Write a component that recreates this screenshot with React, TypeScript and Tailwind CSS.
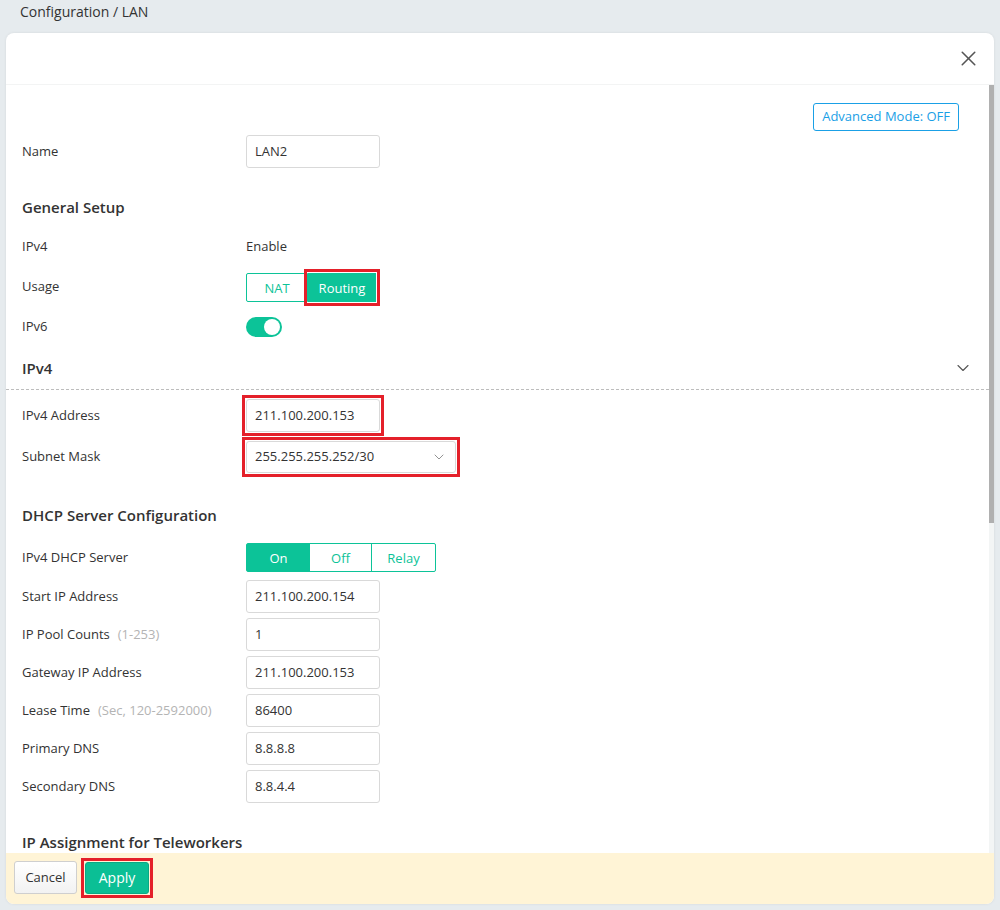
import { X, ChevronDown } from 'lucide-react';

const TEAL = 'bg-[#0cc398]';

// square red annotation frame drawn over a control
const RedBox = ({ children }: { children: React.ReactNode }) => (
  <div className="relative">
    {children}
    <span className="absolute -inset-1 border-[3px] border-[#e4202a] pointer-events-none" />
  </div>
);

const Field = ({ value }: { value: string }) => (
  <div className="w-[134px] h-[33px] border border-[#d9d9d9] rounded-[3px] bg-white flex items-center px-2 text-[13px] text-[#333]">
    {value}
  </div>
);

const Row = ({
  label,
  hint,
  children,
  className = '',
}: {
  label: string;
  hint?: string;
  children: React.ReactNode;
  className?: string;
}) => (
  <div className={`flex items-center ${className}`}>
    <div className="w-[224px] shrink-0 text-[13px] text-[#333]">
      {label}
      {hint && <span className="ml-2 text-[#b4b4b4]">{hint}</span>}
    </div>
    {children}
  </div>
);

const Heading = ({ children, className = '' }: { children: React.ReactNode; className?: string }) => (
  <div className={`h-[22px] flex items-center text-[15px] font-semibold text-[#333] ${className}`}>{children}</div>
);

export default function App() {
  const dhcpRows = [
    { label: 'Start IP Address', value: '211.100.200.154' },
    { label: 'IP Pool Counts', hint: '(1-253)', value: '1' },
    { label: 'Gateway IP Address', value: '211.100.200.153' },
    { label: 'Lease Time', hint: '(Sec, 120-2592000)', value: '86400' },
    { label: 'Primary DNS', value: '8.8.8.8' },
    { label: 'Secondary DNS', value: '8.8.4.4' },
  ];

  return (
    <div className="w-[1000px] h-[910px] bg-[#e6ebee] font-['Open_Sans',sans-serif] text-[#333] overflow-hidden">
      <div className="h-[33px] pl-5 pt-[2px] text-[14px] leading-5 text-[#333]">Configuration / LAN</div>

      <div className="ml-[6px] w-[988px] h-[871px] bg-white rounded-lg shadow-[0_0_3px_rgba(0,0,0,0.08)] flex flex-col overflow-hidden">
        {/* header */}
        <div className="h-[52px] shrink-0 flex items-center justify-end pr-[13px] border-b border-[#f3f4f4]">
          <X size={25} strokeWidth={1.5} className="text-[#555]" />
        </div>

        {/* body */}
        <div className="flex flex-1 min-h-0">
          <div className="flex-1 overflow-hidden pl-4 pr-[30px] pt-[18px]">
            <div className="flex justify-end">
              <div className="h-[28px] px-2 flex items-center border border-[#1aa0e6] rounded-[3px] text-[13px] text-[#1aa0e6]">
                Advanced Mode: OFF
              </div>
            </div>

            <Row label="Name" className="mt-1 h-[33px]">
              <Field value="LAN2" />
            </Row>

            <Heading className="mt-[28px]">General Setup</Heading>

            <Row label="IPv4" className="mt-[9px] h-10">
              <span className="text-[13px]">Enable</span>
            </Row>
            <Row label="Usage" className="h-10">
              <div className="flex h-[29px] text-[13px]">
                <div className="w-[62px] border border-[#0cc398] rounded-l-[2px] text-[#0cc398] flex items-center justify-center pt-[3px]">
                  NAT
                </div>
                <RedBox>
                  <div className={`w-[68px] h-[29px] ${TEAL} text-white flex items-center justify-center pt-[3px]`}>
                    Routing
                  </div>
                </RedBox>
              </div>
            </Row>
            <Row label="IPv6" className="h-10">
              <div className={`w-9 h-5 rounded-full ${TEAL} flex items-center justify-end pr-[2px]`}>
                <div className="w-4 h-4 rounded-full bg-white" />
              </div>
            </Row>

            <div className="-ml-4 -mr-[30px] pl-4 pr-[16px] h-[43px] flex items-center justify-between border-b border-dashed border-[#bdbdbd]">
              <span className="text-[15px] font-semibold">IPv4</span>
              <ChevronDown size={20} strokeWidth={1.3} className="text-[#555]" />
            </div>

            <Row label="IPv4 Address" className="mt-[9px] h-[33px]">
              <RedBox>
                <Field value="211.100.200.153" />
              </RedBox>
            </Row>
            <Row label="Subnet Mask" className="mt-[9px] h-[32px]">
              <RedBox>
                <div className="w-[210px] h-[32px] border border-[#d9d9d9] rounded-[3px] flex items-center justify-between px-2 text-[13px]">
                  <span>255.255.255.252/30</span>
                  <ChevronDown size={16} strokeWidth={1.2} className="text-[#777]" />
                </div>
              </RedBox>
            </Row>

            <Heading className="mt-[31px]">DHCP Server Configuration</Heading>

            <Row label="IPv4 DHCP Server" className="mt-[17px] h-[29px]">
              <div className="flex h-[29px] text-[13px] border border-[#0cc398] rounded-[2px]">
                <div className={`w-[63px] ${TEAL} text-white flex items-center justify-center pt-[3px]`}>On</div>
                <div className="w-[62px] text-[#0cc398] border-r border-[#0cc398] flex items-center justify-center pt-[3px]">
                  Off
                </div>
                <div className="w-[63px] text-[#0cc398] flex items-center justify-center pt-[3px]">Relay</div>
              </div>
            </Row>

            <div className="mt-2 flex flex-col gap-[5px]">
              {dhcpRows.map((r) => (
                <Row key={r.label} label={r.label} hint={r.hint} className="h-[33px]">
                  <Field value={r.value} />
                </Row>
              ))}
            </div>

            <Heading className="mt-[28px]">IP Assignment for Teleworkers</Heading>
          </div>

          {/* scrollbar */}
          <div className="w-[5px] shrink-0 bg-[#f3f5f5]">
            <div className="h-[438px] bg-[#b0b0b0]" />
          </div>
        </div>

        {/* footer */}
        <div className="h-[51px] shrink-0 bg-[#fff4d6] flex items-center gap-2 pl-2 pb-[2px]">
          <div className="h-[33px] w-[63px] flex items-center justify-center border border-[#cfcfcf] rounded-[3px] bg-gradient-to-b from-white to-[#f2f2f2] text-[13px]">
            Cancel
          </div>
          <RedBox>
            <div className="h-[32px] w-[64px] flex items-center justify-center rounded-[3px] bg-[#0bbf95] border border-[#0aa884] text-white text-[14px]">
              Apply
            </div>
          </RedBox>
        </div>
      </div>
    </div>
  );
}
